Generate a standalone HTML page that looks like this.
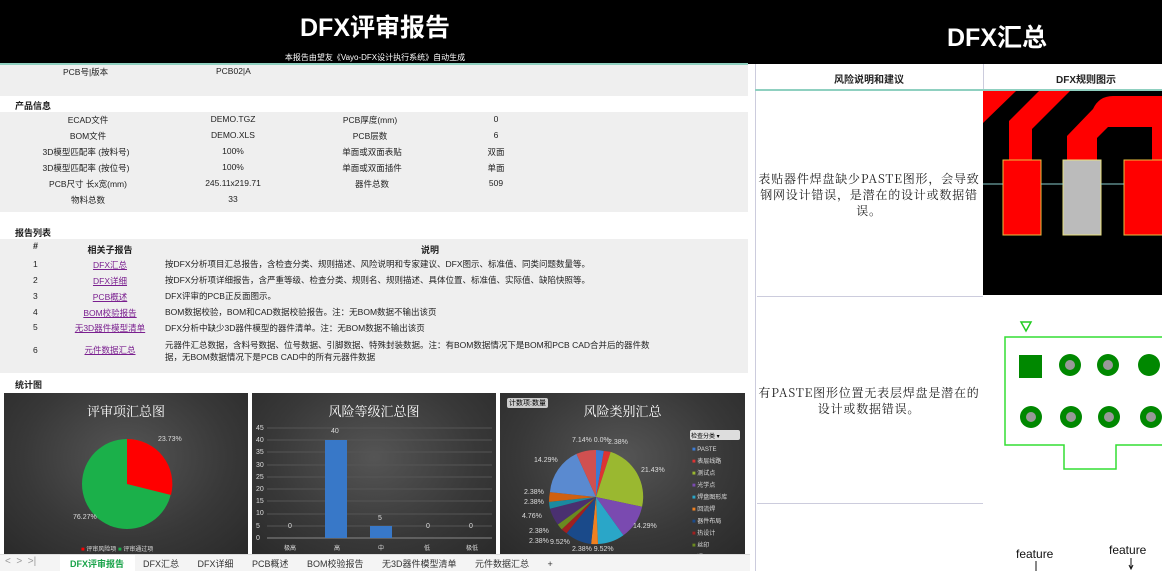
<!DOCTYPE html>
<html><head><meta charset="utf-8"><style>
*{margin:0;padding:0;box-sizing:border-box}
body{width:1162px;height:571px;overflow:hidden;background:#fff;font-family:"Liberation Sans","Noto Sans CJK SC",sans-serif;position:relative;font-size:8.5px;color:#222}
.a{position:absolute;white-space:nowrap}
.c{transform:translateX(-50%)}
.band{position:absolute;left:0;width:748px;background:#efefef}
.h{font-weight:bold;font-size:9px}
.lk{color:#7a1f8f;text-decoration:underline}
.ch{position:absolute;top:393px;height:161px;background:radial-gradient(ellipse at 50% 40%,#555 0%,#383838 60%,#2a2a2a 100%)}
.ct{position:absolute;width:100%;text-align:center;top:8px;color:#fff;font-size:13px;font-family:"Noto Serif CJK SC",serif}
.w{color:#ddd;font-size:7px;position:absolute;white-space:nowrap}
</style></head><body>
<div class="a" style="left:0;top:0;width:1162px;height:64px;background:#000"></div>
<div class="a c" style="left:375px;top:8px;color:#fff;font-size:25px;font-weight:bold">DFX评审报告</div>
<div class="a c" style="left:375px;top:52px;color:#fff;font-size:8px">本报告由望友《Vayo-DFX设计执行系统》自动生成</div>
<div class="a c" style="left:997px;top:18px;color:#fff;font-size:25px;font-weight:bold">DFX汇总</div>
<div class="a" style="left:0;top:63px;width:748px;height:2px;background:#8fd0c0"></div>

<div class="band" style="top:65px;height:31px"></div>
<div class="a" style="left:63px;top:66px">PCB号|版本</div><div class="a" style="left:216px;top:66px">PCB02|A</div>
<div class="a h" style="left:15px;top:99px">产品信息</div>
<div class="band" style="top:112px;height:100px"></div>
<div class="a c" style="left:88px;top:114px">ECAD文件</div><div class="a c" style="left:233px;top:114px">DEMO.TGZ</div><div class="a c" style="left:370px;top:114px">PCB厚度(mm)</div><div class="a c" style="left:496px;top:114px">0</div>
<div class="a c" style="left:88px;top:130px">BOM文件</div><div class="a c" style="left:233px;top:130px">DEMO.XLS</div><div class="a c" style="left:370px;top:130px">PCB层数</div><div class="a c" style="left:496px;top:130px">6</div>
<div class="a c" style="left:86px;top:146px">3D模型匹配率 (按料号)</div><div class="a c" style="left:233px;top:146px">100%</div><div class="a c" style="left:372px;top:146px">单面或双面表贴</div><div class="a c" style="left:496px;top:146px">双面</div>
<div class="a c" style="left:86px;top:162px">3D模型匹配率 (按位号)</div><div class="a c" style="left:233px;top:162px">100%</div><div class="a c" style="left:372px;top:162px">单面或双面插件</div><div class="a c" style="left:496px;top:162px">单面</div>
<div class="a c" style="left:88px;top:178px">PCB尺寸 长x宽(mm)</div><div class="a c" style="left:233px;top:178px">245.11x219.71</div><div class="a c" style="left:372px;top:178px">器件总数</div><div class="a c" style="left:496px;top:178px">509</div>
<div class="a c" style="left:88px;top:194px">物料总数</div><div class="a c" style="left:233px;top:194px">33</div>
<div class="a h" style="left:15px;top:226px">报告列表</div>
<div class="band" style="top:239px;height:134px"></div>
<div class="a h" style="left:33px;top:241px">#</div><div class="a h c" style="left:110px;top:243px">相关子报告</div><div class="a h c" style="left:430px;top:243px">说明</div>
<div class="a" style="left:33px;top:259px">1</div><div class="a c lk" style="left:110px;top:259px">DFX汇总</div><div class="a" style="left:165px;top:258px">按DFX分析项目汇总报告，含检查分类、规则描述、风险说明和专家建议、DFX图示、标准值、同类问题数量等。</div>
<div class="a" style="left:33px;top:275px">2</div><div class="a c lk" style="left:110px;top:275px">DFX详细</div><div class="a" style="left:165px;top:274px">按DFX分析项详细报告，含严重等级、检查分类、规则名、规则描述、具体位置、标准值、实际值、缺陷快照等。</div>
<div class="a" style="left:33px;top:291px">3</div><div class="a c lk" style="left:110px;top:291px">PCB概述</div><div class="a" style="left:165px;top:290px">DFX评审的PCB正反面图示。</div>
<div class="a" style="left:33px;top:307px">4</div><div class="a c lk" style="left:110px;top:307px">BOM校验报告</div><div class="a" style="left:165px;top:306px">BOM数据校验，BOM和CAD数据校验报告。注：无BOM数据不输出该页</div>
<div class="a" style="left:33px;top:322px">5</div><div class="a c lk" style="left:110px;top:322px">无3D器件模型清单</div><div class="a" style="left:165px;top:322px">DFX分析中缺少3D器件模型的器件清单。注：无BOM数据不输出该页</div>
<div class="a" style="left:33px;top:345px">6</div><div class="a c lk" style="left:110px;top:344px">元件数据汇总</div><div class="a" style="left:165px;top:339px;line-height:12px">元器件汇总数据，含料号数据、位号数据、引脚数据、特殊封装数据。注：有BOM数据情况下是BOM和PCB CAD合并后的器件数<br>据，无BOM数据情况下是PCB CAD中的所有元器件数据</div>
<div class="a h" style="left:15px;top:378px">统计图</div>

<div class="ch" style="left:4px;width:244px"><div class="ct">评审项汇总图</div>
<svg class="a" style="left:0;top:0" width="244" height="161"><circle cx="123" cy="91" r="45" fill="#1bb04a"/><path d="M123 91 L123 46 A45 45 0 0 1 167 102 Z" fill="#f00"/></svg>
<div class="w" style="left:154px;top:43px">23.73%</div><div class="w" style="left:69px;top:121px">76.27%</div>
<div class="w" style="left:77px;top:151px;font-size:6px"><span style="color:#f00">■</span> 评审风险项 <span style="color:#1bb04a">■</span> 评审通过项</div></div>

<div class="ch" style="left:252px;width:244px"><div class="ct">风险等级汇总图</div>
<svg class="a" style="left:0;top:0" width="244" height="161">
<g stroke="#555" stroke-width="1">
<line x1="15" y1="35" x2="240" y2="35"/><line x1="15" y1="47" x2="240" y2="47"/><line x1="15" y1="59" x2="240" y2="59"/><line x1="15" y1="72" x2="240" y2="72"/><line x1="15" y1="84" x2="240" y2="84"/><line x1="15" y1="96" x2="240" y2="96"/><line x1="15" y1="108" x2="240" y2="108"/><line x1="15" y1="121" x2="240" y2="121"/><line x1="15" y1="133" x2="240" y2="133"/><line x1="15" y1="145" x2="240" y2="145" stroke="#888"/></g>
<rect x="73" y="47" width="22" height="98" fill="#3878c8"/><rect x="118" y="133" width="22" height="12" fill="#3878c8"/></svg>
<div class="w" style="left:4px;top:30px;line-height:12.2px">45<br>40<br>35<br>30<br>25<br>20<br>15<br>10<br>5<br>0</div>
<div class="w" style="left:79px;top:35px">40</div><div class="w" style="left:126px;top:122px">5</div>
<div class="w" style="left:36px;top:130px">0</div><div class="w" style="left:174px;top:130px">0</div><div class="w" style="left:217px;top:130px">0</div>
<div class="w" style="left:32px;top:150px;font-size:6px">极高</div><div class="w" style="left:82px;top:150px;font-size:6px">高</div><div class="w" style="left:126px;top:150px;font-size:6px">中</div><div class="w" style="left:172px;top:150px;font-size:6px">低</div><div class="w" style="left:214px;top:150px;font-size:6px">极低</div></div>

<div class="ch" style="left:500px;width:245px"><div class="ct">风险类别汇总</div>
<div class="a" style="left:7px;top:5px;background:#ccc;color:#000;font-size:7px;padding:0 2px;border-radius:2px">计数项:数量</div>
<svg class="a" style="left:0;top:0" width="245" height="161">
<g transform="translate(96,104) scale(0.98)">
<path d="M0 0 L0 -48 A48 48 0 0 1 8 -47 Z" fill="#3a7bd5"/>
<path d="M0 0 L8 -47 A48 48 0 0 1 15 -46 Z" fill="#d33"/>
<path d="M0 0 L15 -46 A48 48 0 0 1 47 10 Z" fill="#9ab830"/>
<path d="M0 0 L47 10 A48 48 0 0 1 28 39 Z" fill="#7a4ab0"/>
<path d="M0 0 L28 39 A48 48 0 0 1 2 48 Z" fill="#2aa6c8"/>
<path d="M0 0 L2 48 A48 48 0 0 1 -5 48 Z" fill="#f08020"/>
<path d="M0 0 L-5 48 A48 48 0 0 1 -30 37 Z" fill="#1a4a8a"/>
<path d="M0 0 L-30 37 A48 48 0 0 1 -35 33 Z" fill="#a02020"/>
<path d="M0 0 L-35 33 A48 48 0 0 1 -39 28 Z" fill="#6a8a20"/>
<path d="M0 0 L-39 28 A48 48 0 0 1 -47 12 Z" fill="#4a3070"/>
<path d="M0 0 L-47 12 A48 48 0 0 1 -48 5 Z" fill="#1a8aa0"/>
<path d="M0 0 L-48 5 A48 48 0 0 1 -47 -5 Z" fill="#d06010"/>
<path d="M0 0 L-47 -5 A48 48 0 0 1 -20 -44 Z" fill="#5a8ad0"/>
<path d="M0 0 L-20 -44 A48 48 0 0 1 0 -48 Z" fill="#d05050"/>
</g>
<rect x="190" y="37" width="50" height="10" fill="#ddd" rx="2"/></svg>
<div class="w" style="left:191px;top:38px;color:#000;font-size:6px">检查分类 ▾</div>
<div class="w" style="left:192px;top:51px;font-size:6px;line-height:12px"><span style="color:#3a7bd5">■</span> PASTE<br><span style="color:#d33">■</span> 表层线路<br><span style="color:#9ab830">■</span> 测试点<br><span style="color:#7a4ab0">■</span> 光学点<br><span style="color:#2aa6c8">■</span> 焊盘图形库<br><span style="color:#f08020">■</span> 回流焊<br><span style="color:#1a4a8a">■</span> 器件布局<br><span style="color:#a02020">■</span> 热设计<br><span style="color:#6a8a20">■</span> 丝印<br><span style="color:#4a3070">■</span> 通用</div>
<div class="w" style="left:72px;top:44px">7.14% 0.0%</div><div class="w" style="left:108px;top:46px">2.38%</div>
<div class="w" style="left:34px;top:64px">14.29%</div><div class="w" style="left:141px;top:74px">21.43%</div>
<div class="w" style="left:24px;top:95px;line-height:10px">2.38%<br>2.38%</div><div class="w" style="left:22px;top:120px">4.76%</div>
<div class="w" style="left:29px;top:134px;line-height:10px">2.38%<br>2.38%</div><div class="w" style="left:133px;top:130px">14.29%</div>
<div class="w" style="left:50px;top:146px">9.52%</div><div class="w" style="left:72px;top:153px">2.38% 9.52%</div></div>

<div class="a" style="left:0;top:554px;width:750px;height:17px;background:#f4f4f4;border-top:1px solid #ddd"></div>
<div class="a" style="left:5px;top:556px;color:#999;font-size:10px">&lt; &nbsp;&gt; &nbsp;&gt;|</div>
<div class="a" style="left:60px;top:555px;width:75px;height:16px;background:#fff"></div>
<div class="a" style="left:70px;top:557px;color:#1aa34a;font-weight:bold;font-size:9px">DFX评审报告</div>
<div class="a" style="left:143px;top:557px;color:#333;font-size:9px;word-spacing:16px">DFX汇总 DFX详细 PCB概述 BOM校验报告 无3D器件模型清单 元件数据汇总 +</div>

<div class="a" style="left:755px;top:64px;width:1px;height:507px;background:#ccd"></div>
<div class="a" style="left:983px;top:64px;width:1px;height:27px;background:#ccd"></div>
<div class="a" style="left:755px;top:89px;width:407px;height:2px;background:#8fd0c0"></div>
<div class="a h c" style="left:869px;top:71px;font-size:10px">风险说明和建议</div>
<div class="a h c" style="left:1086px;top:71px;font-size:10px">DFX规则图示</div>
<div class="a" style="left:757px;top:296px;width:226px;height:1px;background:#ccd"></div>
<div class="a" style="left:757px;top:503px;width:226px;height:1px;background:#ccd"></div>
<div class="a c" style="left:869px;top:171px;font-size:12px;letter-spacing:0.8px;line-height:16px;text-align:center;white-space:normal;width:226px;font-family:'Noto Serif CJK SC',serif">表贴器件焊盘缺少PASTE图形，会导致钢网设计错误，是潜在的设计或数据错误。</div>
<div class="a c" style="left:869px;top:385px;font-size:12px;letter-spacing:0.8px;line-height:16px;text-align:center;white-space:normal;width:226px;font-family:'Noto Serif CJK SC',serif">有PASTE图形位置无表层焊盘是潜在的设计或数据错误。</div>
<svg class="a" style="left:983px;top:91px" width="179" height="480">
<rect width="179" height="204" fill="#000"/>
<path d="M0 0 L33 0 L0 32 Z" fill="#f00"/>
<path d="M26 69 L26 30 L56 0 L87 0 L49 38 L49 69 Z" fill="#f00"/>
<path d="M84 69 L84 45 L110 18 Q116 5 130 5 L179 5 L179 69 L169 69 L169 36 L125 36 L114 47 L114 69 Z" fill="#f00"/>
<rect x="20" y="69" width="38" height="75" fill="#f00" stroke="#e8c040"/>
<rect x="80" y="69" width="38" height="75" fill="#bbb" stroke="#e8e080"/>
<rect x="141" y="69" width="40" height="75" fill="#f00" stroke="#e8c040"/>
<line x1="0" y1="93" x2="20" y2="93" stroke="#8cc"/><line x1="58" y1="93" x2="80" y2="93" stroke="#8cc"/><line x1="118" y1="93" x2="141" y2="93" stroke="#8cc"/>
<path d="M38 231 L48 231 L43 240 Z" fill="none" stroke="#2c2" stroke-width="1.5"/>
<path d="M179 246 L22 246 L22 354 L81 354 L81 378 L133 378 L133 354 L179 354" fill="none" stroke="#3d3" stroke-width="1.5"/>
<rect x="36" y="264" width="23" height="23" fill="#080"/>
<g fill="#080"><circle cx="87" cy="274" r="11"/><circle cx="125" cy="274" r="11"/><circle cx="166" cy="274" r="11"/><circle cx="48" cy="326" r="11"/><circle cx="88" cy="326" r="11"/><circle cx="126" cy="326" r="11"/><circle cx="168" cy="326" r="11"/></g>
<g fill="#999"><circle cx="87" cy="274" r="5"/><circle cx="125" cy="274" r="5"/><circle cx="48" cy="326" r="5"/><circle cx="88" cy="326" r="5"/><circle cx="126" cy="326" r="5"/><circle cx="168" cy="326" r="5"/></g>
<text x="33" y="467" font-size="12" font-family="Liberation Sans" fill="#111">feature</text>
<text x="126" y="463" font-size="12" font-family="Liberation Sans" fill="#111">feature</text>
<line x1="53" y1="470" x2="53" y2="480" stroke="#111"/><path d="M148 467 L148 477 M146 474 L148 478 L150 474" stroke="#111" fill="none"/>
</svg>
</body></html>
